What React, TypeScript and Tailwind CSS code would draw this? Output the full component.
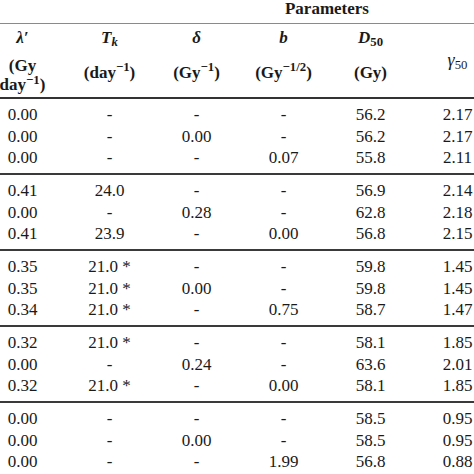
import React from 'react';

type Row = [string, string, string, string, string, string];

const groups: Row[][] = [
    [
        ['0.00', '-', '-', '-', '56.2', '2.17'],
        ['0.00', '-', '0.00', '-', '56.2', '2.17'],
        ['0.00', '-', '-', '0.07', '55.8', '2.11'],
    ],
    [
        ['0.41', '24.0', '-', '-', '56.9', '2.14'],
        ['0.00', '-', '0.28', '-', '62.8', '2.18'],
        ['0.41', '23.9', '-', '0.00', '56.8', '2.15'],
    ],
    [
        ['0.35', '21.0 *', '-', '-', '59.8', '1.45'],
        ['0.35', '21.0 *', '0.00', '-', '59.8', '1.45'],
        ['0.34', '21.0 *', '-', '0.75', '58.7', '1.47'],
    ],
    [
        ['0.32', '21.0 *', '-', '-', '58.1', '1.85'],
        ['0.00', '-', '0.24', '-', '63.6', '2.01'],
        ['0.32', '21.0 *', '-', '0.00', '58.1', '1.85'],
    ],
    [
        ['0.00', '-', '-', '-', '58.5', '0.95'],
        ['0.00', '-', '0.00', '-', '58.5', '0.95'],
        ['0.00', '-', '-', '1.99', '56.8', '0.88'],
    ],
];

const cols = 'grid grid-cols-[87px_87px_87px_87px_87px_87px]';

function Symbol({ children }: { children: React.ReactNode }) {
    return <div className="mt-[4.5px] h-[20px] leading-[20px] font-bold italic">{children}</div>;
}

function Units({ children }: { children: React.ReactNode }) {
    return <div className="mt-[14.5px] h-[20px] leading-[20px] font-bold">{children}</div>;
}

export default function App() {
    return (
        <div className="w-[474px] h-[474px] overflow-hidden bg-white text-[#1a1a1a] text-[17px] font-['Liberation_Serif',serif]">
            <div className="ml-[-21px] w-[522px]">
                {/* Spanning header */}
                <div className={`${cols} h-[23.5px] border-b-[1.5px] border-[#8a8a8a]`}>
                    <div className="col-start-3 col-span-4 pt-[1px] text-center font-bold leading-[15px]">Parameters</div>
                </div>

                {/* Column headers */}
                <div className={`${cols} h-[75.5px] border-b-2 border-[#333]`}>
                    <div className="flex flex-col items-center">
                        <Symbol>λ′</Symbol>
                        <div className="mt-[9px] h-[17px] leading-[17px] font-bold">(Gy</div>
                        <div className="mt-[2px] h-[17px] leading-[17px] font-bold">
                            day<sup>−1</sup>)
                        </div>
                    </div>
                    <div className="flex flex-col items-center">
                        <Symbol>
                            T<sub>k</sub>
                        </Symbol>
                        <Units>
                            (day<sup>−1</sup>)
                        </Units>
                    </div>
                    <div className="flex flex-col items-center">
                        <Symbol>δ</Symbol>
                        <Units>
                            (Gy<sup>−1</sup>)
                        </Units>
                    </div>
                    <div className="flex flex-col items-center">
                        <Symbol>b</Symbol>
                        <Units>
                            (Gy<sup>−1/2</sup>)
                        </Units>
                    </div>
                    <div className="flex flex-col items-center">
                        <Symbol>
                            D<sub className="not-italic">50</sub>
                        </Symbol>
                        <Units>(Gy)</Units>
                    </div>
                    <div className="flex flex-col items-center">
                        <div className="mt-[26px] h-[20px] leading-[20px]">
                            <span className="italic text-[18px]">γ</span>
                            <sub>50</sub>
                        </div>
                    </div>
                </div>

                {/* Data groups */}
                {groups.map((g, gi) => (
                    <div
                        key={gi}
                        className={`h-[76px] pt-[5.25px] ${gi < groups.length - 1 ? 'border-b-2 border-[#3a3a3a]' : ''}`}
                    >
                        {g.map((r, ri) => (
                            <div key={ri} className={`${cols} h-[21.5px] leading-[21.5px] text-center`}>
                                {r.map((c, ci) => (
                                    <div key={ci}>{c}</div>
                                ))}
                            </div>
                        ))}
                    </div>
                ))}
            </div>
        </div>
    );
}
